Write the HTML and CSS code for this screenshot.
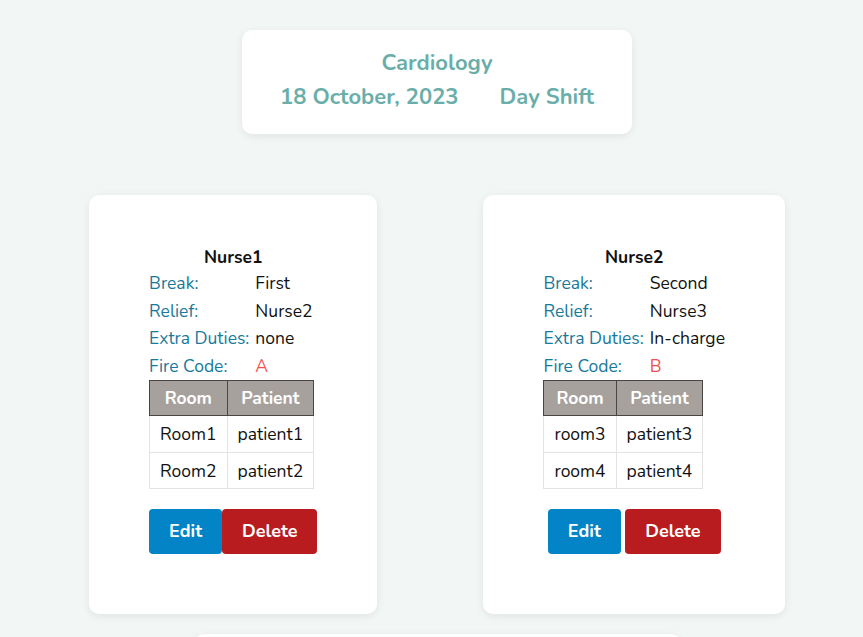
FILE: index.html
```html
<!DOCTYPE html>
<html>
<head>
<meta charset="utf-8">
<link rel="stylesheet" href="styles.css">
</head>
<body>
<div class="page">
  <header class="shift-card">
    <div class="dept">Cardiology</div>
    <div class="shift-line"><span>18 October, 2023</span><span>Day Shift</span></div>
  </header>

  <section class="nurses">
    <article class="nurse-card">
      <div class="nurse-body">
        <div class="nurse-name">Nurse1</div>
        <div class="info">
          <span class="lbl">Break:</span><span class="val">First</span>
          <span class="lbl">Relief:</span><span class="val">Nurse2</span>
          <span class="lbl">Extra Duties:</span><span class="val">none</span>
          <span class="lbl">Fire Code:</span><span class="val fire">A</span>
        </div>
        <table class="rooms">
          <thead><tr><th>Room</th><th>Patient</th></tr></thead>
          <tbody>
            <tr><td>Room1</td><td>patient1</td></tr>
            <tr><td>Room2</td><td>patient2</td></tr>
          </tbody>
        </table>
        <div class="actions">
          <button class="btn edit">Edit</button>
          <button class="btn delete">Delete</button>
        </div>
      </div>
    </article>

    <article class="nurse-card">
      <div class="nurse-body">
        <div class="nurse-name">Nurse2</div>
        <div class="info">
          <span class="lbl">Break:</span><span class="val">Second</span>
          <span class="lbl">Relief:</span><span class="val">Nurse3</span>
          <span class="lbl">Extra Duties:</span><span class="val">In-charge</span>
          <span class="lbl">Fire Code:</span><span class="val fire">B</span>
        </div>
        <table class="rooms">
          <thead><tr><th>Room</th><th>Patient</th></tr></thead>
          <tbody>
            <tr><td>room3</td><td>patient3</td></tr>
            <tr><td>room4</td><td>patient4</td></tr>
          </tbody>
        </table>
        <div class="actions">
          <button class="btn edit">Edit</button>
          <button class="btn delete">Delete</button>
        </div>
      </div>
    </article>
  </section>

  <section class="more-card"></section>
</div>
</body>
</html>
```

FILE: styles.css
```css
* { box-sizing: border-box; }
html, body {
  margin: 0;
  padding: 0;
  background: #f2f7f5;
  height: 100%;
  overflow: hidden;
}
body {
  font-family: "Nunito", Lato, "Liberation Sans", sans-serif;
  font-size: 17.5px;
  color: #111;
}
.page {
  display: flex;
  flex-direction: column;
  align-items: center;
  padding-top: 30px;
  padding-left: 11px;
}
.shift-card {
  width: 390px;
  background: #fff;
  border-radius: 10px;
  box-shadow: 0 2px 8px rgba(0,0,0,0.08);
  padding: 18px 20px 22px;
  text-align: center;
  color: #6aaeaa;
  font-weight: 700;
  font-size: 22px;
  line-height: 30px;
}
.shift-line {
  margin-top: 4px;
  display: flex;
  justify-content: center;
  gap: 41px;
}
.nurses {
  margin-top: 61px;
  display: flex;
  justify-content: center;
  gap: 106px;
  width: 100%;
}
.nurse-card {
  background: #fff;
  border-radius: 10px;
  box-shadow: 0 2px 8px rgba(0,0,0,0.08);
  padding: 50px 60px 60px;
}
.nurse-body {
  display: flex;
  flex-direction: column;
  align-items: flex-start;
}
.nurse-name {
  align-self: stretch;
  text-align: center;
  font-weight: 700;
  line-height: 25px;
}
.info {
  display: grid;
  grid-template-columns: auto auto;
  line-height: 27.6px;
}
.lbl { color: #19799a; padding-right: 6px; }
.val { color: #111; }
.fire { color: #f0504e; }
.rooms {
  border-collapse: collapse;
  text-align: center;
  line-height: 24px;
}
.rooms th {
  background: #a7a19d;
  color: #fff;
  font-weight: 700;
  border: 1px solid #4a4544;
  padding: 5px 10px;
}
.rooms td {
  border: 1px solid #e3e3e3;
  padding: 5.75px 10px;
}
.actions {
  align-self: stretch;
  margin-top: 20px;
  display: flex;
  justify-content: space-evenly;
}
.btn {
  font-family: inherit;
  font-size: 18px;
  font-weight: 700;
  color: #fff;
  border: none;
  border-radius: 4px;
  padding: 10px 20px;
  line-height: 25px;
}
.edit { background: #0384c6; }
.delete { background: #b91c1f; }
.more-card {
  margin-top: 20px;
  width: 487px;
  height: 120px;
  background: #fff;
  border-radius: 10px;
  box-shadow: 0 2px 8px rgba(0,0,0,0.08);
}
```
